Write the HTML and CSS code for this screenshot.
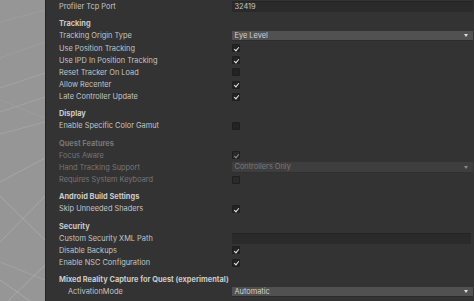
FILE: index.html
```html
<!DOCTYPE html>
<html lang="en">
<head>
   <meta charset="UTF-8">
   <title>Project Settings - Oculus</title>
   <link rel="stylesheet" href="styles.css">
</head>
<body>
   <div class="app">
      <div class="scene">
         <svg width="45" height="301" viewBox="0 0 45 301">
            <g stroke="#b4b4b4" stroke-width="0.8" fill="none">
               <line x1="0" y1="22" x2="45" y2="10" opacity="0.35"/>
               <line x1="0" y1="58" x2="45" y2="42" opacity="0.35"/>
               <line x1="0" y1="88" x2="45" y2="73" opacity="0.5"/>
               <line x1="0" y1="112" x2="45" y2="97" opacity="0.5"/>
               <line x1="0" y1="134" x2="45" y2="122" opacity="0.6"/>
               <line x1="0" y1="100" x2="45" y2="118" opacity="0.35"/>
               <line x1="0" y1="182" x2="45" y2="158" opacity="0.7"/>
               <line x1="0" y1="196" x2="45" y2="240" opacity="0.75"/>
               <line x1="0" y1="242" x2="45" y2="196" opacity="0.75"/>
               <line x1="0" y1="262" x2="45" y2="280" opacity="0.6"/>
               <line x1="0" y1="280" x2="30" y2="301" opacity="0.8"/>
               <line x1="8" y1="301" x2="45" y2="265" opacity="0.8"/>
            </g>
         </svg>
      </div>
      <div class="inspector">
         <div class="row">
            <span class="label">Profiler Tcp Port</span>
            <div class="field">32419</div>
         </div>

         <div class="row head">Tracking</div>
         <div class="row">
            <span class="label">Tracking Origin Type</span>
            <div class="dropdown">Eye Level<span class="arrow"></span></div>
         </div>
         <div class="row">
            <span class="label">Use Position Tracking</span>
            <span class="check on"></span>
         </div>
         <div class="row">
            <span class="label">Use IPD In Position Tracking</span>
            <span class="check on"></span>
         </div>
         <div class="row">
            <span class="label">Reset Tracker On Load</span>
            <span class="check"></span>
         </div>
         <div class="row">
            <span class="label">Allow Recenter</span>
            <span class="check on"></span>
         </div>
         <div class="row">
            <span class="label">Late Controller Update</span>
            <span class="check on"></span>
         </div>

         <div class="row head">Display</div>
         <div class="row">
            <span class="label">Enable Specific Color Gamut</span>
            <span class="check"></span>
         </div>

         <div class="row head disabled">Quest Features</div>
         <div class="row disabled">
            <span class="label">Focus Aware</span>
            <span class="check on"></span>
         </div>
         <div class="row disabled">
            <span class="label">Hand Tracking Support</span>
            <div class="dropdown">Controllers Only<span class="arrow"></span></div>
         </div>
         <div class="row disabled">
            <span class="label">Requires System Keyboard</span>
            <span class="check"></span>
         </div>

         <div class="row head">Android Build Settings</div>
         <div class="row">
            <span class="label">Skip Unneeded Shaders</span>
            <span class="check on"></span>
         </div>

         <div class="row head">Security</div>
         <div class="row">
            <span class="label">Custom Security XML Path</span>
            <div class="field path"></div>
         </div>
         <div class="row">
            <span class="label">Disable Backups</span>
            <span class="check on"></span>
         </div>
         <div class="row">
            <span class="label">Enable NSC Configuration</span>
            <span class="check on"></span>
         </div>

         <div class="row head">Mixed Reality Capture for Quest (experimental)</div>
         <div class="row">
            <span class="label indent">ActivationMode</span>
            <div class="dropdown">Automatic<span class="arrow"></span></div>
         </div>
      </div>
   </div>
</body>
</html>
```

FILE: styles.css
```css
body {
   margin: 0;
   width: 474px;
   height: 301px;
   overflow: hidden;
   background-color: #333;
   font-family: Inter, "Noto Sans", sans-serif;
   font-size: 7.4px;
   color: #c4c4c4;
}

.app {
   display: flex;
   height: 301px;
}

.scene {
   width: 45px;
   flex-shrink: 0;
   background-color: #969696;
   border-right: 1px solid #232323;
}

.scene svg {
   display: block;
}

.inspector {
   flex: 1;
   padding: 0.5px 1px 0 13px;
   background-color: #333;
}

.row {
   display: flex;
   align-items: center;
   height: 12.17px;
   white-space: nowrap;
}

.head {
   margin-top: 5px;
   font-weight: 700;
   color: #cacaca;
}

.label {
   width: 173px;
   flex-shrink: 0;
}

.label.indent {
   padding-left: 9px;
   width: 164px;
}

.disabled {
   color: #767676;
}

.field {
   flex: 1;
   height: 10px;
   line-height: 10px;
   padding-left: 2.5px;
   background-color: #2a2a2a;
   border-top: 1px solid #242424;
}

.field.path {
   margin-right: 2px;
}

.dropdown {
   flex: 1;
   position: relative;
   height: 9.5px;
   line-height: 9.5px;
   padding-left: 2.5px;
   background-color: #515151;
   border-bottom: 1px solid #2c2c2c;
   color: #d2d2d2;
}

.disabled .dropdown {
   background-color: #3e3e3e;
   color: #7a7a7a;
   border-bottom-color: #303030;
}

.arrow {
   position: absolute;
   right: 5px;
   top: 3.5px;
   width: 0;
   height: 0;
   border-left: 2.5px solid transparent;
   border-right: 2.5px solid transparent;
   border-top: 3px solid #dedede;
}

.disabled .arrow {
   border-top-color: #8a8a8a;
}

.check {
   width: 8px;
   height: 8px;
   box-sizing: border-box;
   background-color: #232323;
   border: 1px solid #1e1e1e;
   border-radius: 1px;
   position: relative;
}

.disabled .check {
   background-color: #2a2a2a;
}

.check.on::after {
   content: "";
   position: absolute;
   left: 1.6px;
   top: 0.6px;
   width: 2px;
   height: 4px;
   border-right: 1.2px solid #e6e6e6;
   border-bottom: 1.2px solid #e6e6e6;
   transform: rotate(40deg);
}

.disabled .check.on::after {
   border-color: #8c8c8c;
}
```
